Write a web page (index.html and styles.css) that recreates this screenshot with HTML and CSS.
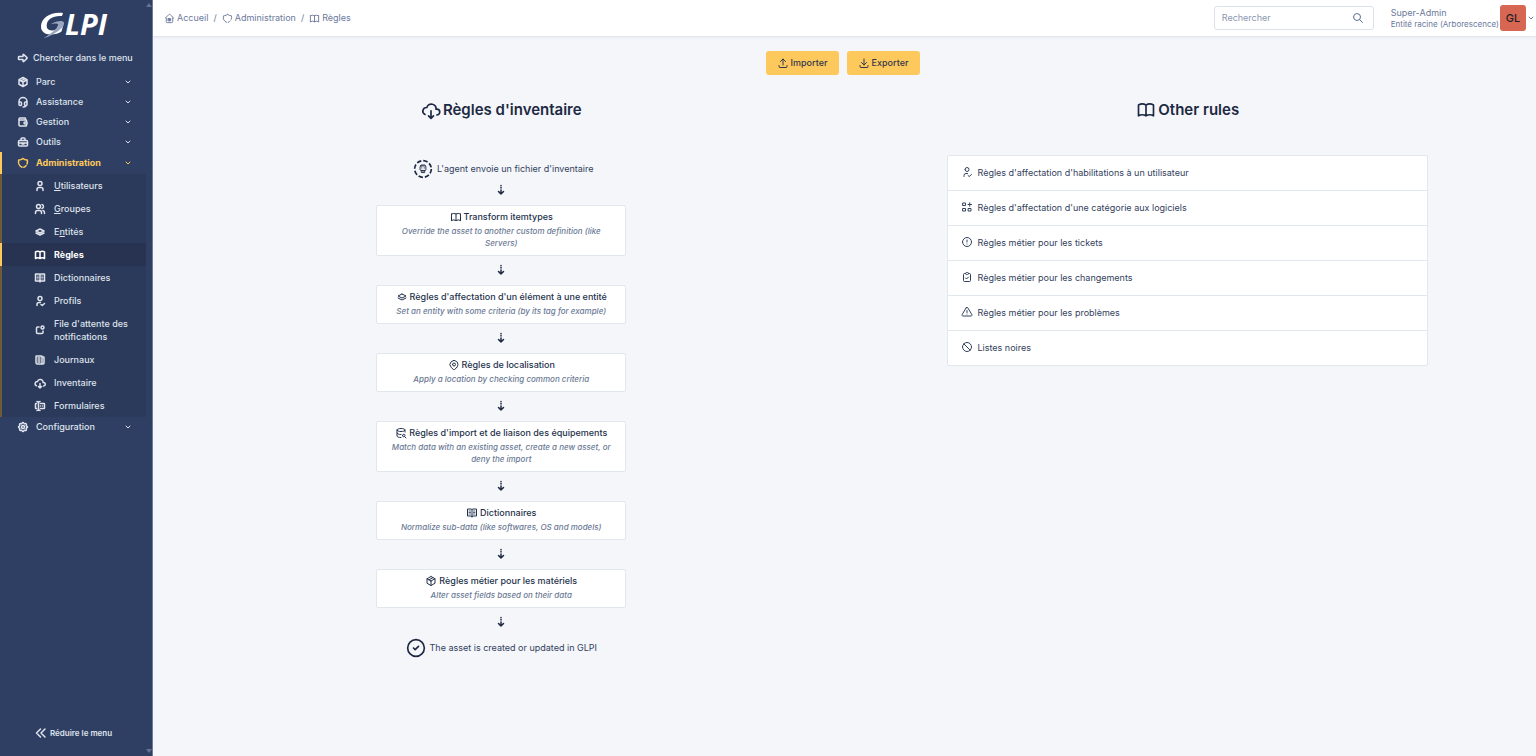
FILE: index.html
```html
<!DOCTYPE html>
<html lang="fr">
<head>
<meta charset="utf-8">
<title>Règles - GLPI</title>
<link rel="stylesheet" href="styles.css">
</head>
<body>
<svg class="sprite" aria-hidden="true">
  <symbol id="i-arrow-right" viewBox="0 0 24 24"><path d="M4 9h8V5.500a.9.9 0 0 1 1.500-.6l6.500 6.400a1 1 0 0 1 0 1.400l-6.500 6.400a.9.9 0 0 1-1.500-.6V15H4a1 1 0 0 1-1-1v-4a1 1 0 0 1 1-1z"/></symbol>
  <symbol id="i-package" viewBox="0 0 24 24"><path d="M12 3l8 4.500v9L12 21l-8-4.500v-9L12 3M12 12l8-4.500M12 12v9M12 12L4 7.500M16 5.250l-8 4.500"/></symbol>
  <symbol id="i-headset" viewBox="0 0 24 24"><path d="M4 14v-3a8 8 0 1 1 16 0v3M18 19c0 1.700-2.700 3-6 3M4 14a2 2 0 0 1 2-2h1a2 2 0 0 1 2 2v3a2 2 0 0 1-2 2H6a2 2 0 0 1-2-2zM15 14a2 2 0 0 1 2-2h1a2 2 0 0 1 2 2v3a2 2 0 0 1-2 2h-1a2 2 0 0 1-2-2z"/></symbol>
  <symbol id="i-wallet" viewBox="0 0 24 24"><path d="M17 8V5a1 1 0 0 0-1-1H6a2 2 0 0 0 0 4h12a1 1 0 0 1 1 1v3m0 4v3a1 1 0 0 1-1 1H6a2 2 0 0 1-2-2V6M20 12v4h-4a2 2 0 0 1 0-4h4"/></symbol>
  <symbol id="i-briefcase" viewBox="0 0 24 24"><path d="M5 9h14a2 2 0 0 1 2 2v7a2 2 0 0 1-2 2H5a2 2 0 0 1-2-2v-7a2 2 0 0 1 2-2zM8 9V6a2 2 0 0 1 2-2h4a2 2 0 0 1 2 2v3M3 14h18M10 14v2h4v-2"/></symbol>
  <symbol id="i-shield" viewBox="0 0 24 24"><path d="M10 20.400A12 12 0 0 1 3.500 6A12 12 0 0 0 8 5.200M12 3a12 12 0 0 0 8.500 3c.8 2.700.6 5.600-.4 8M18 17.300A12 12 0 0 1 13.500 20.500M8 5.200A12 12 0 0 0 12 3"/></symbol>
  <symbol id="i-user" viewBox="0 0 24 24"><path d="M8 7a4 4 0 1 0 8 0a4 4 0 0 0-8 0M6 21v-2a4 4 0 0 1 4-4h4a4 4 0 0 1 4 4v2"/></symbol>
  <symbol id="i-users" viewBox="0 0 24 24"><path d="M5 7a4 4 0 1 0 8 0a4 4 0 1 0-8 0M3 21v-2a4 4 0 0 1 4-4h4a4 4 0 0 1 4 4v2M16 3.130a4 4 0 0 1 0 7.750M21 21v-2a4 4 0 0 0-3-3.850"/></symbol>
  <symbol id="i-stack" viewBox="0 0 24 24"><path d="M12 6l-8 4l8 4l8-4l-8-4M4 14l8 4l8-4"/></symbol>
  <symbol id="i-book" viewBox="0 0 24 24"><path d="M3 19a9 9 0 0 1 9 0a9 9 0 0 1 9 0M3 6a9 9 0 0 1 9 0a9 9 0 0 1 9 0M3 6v13M12 6v13M21 6v13"/></symbol>
  <symbol id="i-dictionary" viewBox="0 0 24 24"><path d="M12 19a2 2 0 0 0-2-1H3V4h7a2 2 0 0 1 2 1a2 2 0 0 1 2-1h7v14h-7a2 2 0 0 0-2 1zM12 5v15"/><path stroke-width="1.500" d="M6 8h3M6 11h3M6 14h3M15 8h3M15 11h3M15 14h3"/></symbol>
  <symbol id="i-user-check" viewBox="0 0 24 24"><path d="M8 7a4 4 0 1 0 8 0a4 4 0 0 0-8 0M6 21v-2a4 4 0 0 1 4-4h3M14 19l2.500 2l4.500-4"/></symbol>
  <symbol id="i-notification" viewBox="0 0 24 24"><path d="M10 6H7a2 2 0 0 0-2 2v9a2 2 0 0 0 2 2h9a2 2 0 0 0 2-2v-3M14 7a3 3 0 1 0 6 0a3 3 0 1 0-6 0"/></symbol>
  <symbol id="i-news" viewBox="0 0 24 24"><path d="M16 6h3a1 1 0 0 1 1 1v11a2 2 0 0 1-4 0V5a1 1 0 0 0-1-1H5a1 1 0 0 0-1 1v12a3 3 0 0 0 3 3h11M8 8h4M8 12h4M8 16h4"/></symbol>
  <symbol id="i-cloud-down" viewBox="0 0 24 24"><path d="M19 18a3.500 3.500 0 0 0 0-7h-1A5 4.500 0 0 0 7 9a4.600 4.400 0 0 0-2.100 8.400M12 13v9M9 19l3 3l3-3"/></symbol>
  <symbol id="i-forms" viewBox="0 0 24 24"><path d="M12 3a3 3 0 0 0-3 3v12a3 3 0 0 0 3 3M6 3a3 3 0 0 1 3 3v12a3 3 0 0 1-3 3M13 7h7a1 1 0 0 1 1 1v8a1 1 0 0 1-1 1h-7M5 7H4a1 1 0 0 0-1 1v8a1 1 0 0 0 1 1h1M17 12h.01M13 12h.01"/></symbol>
  <symbol id="i-settings" viewBox="0 0 24 24"><path d="M10.300 4.300c.4-1.700 2.900-1.700 3.400 0a1.700 1.700 0 0 0 2.500 1.100c1.600-.9 3.300.8 2.400 2.300a1.700 1.700 0 0 0 1.100 2.600c1.700.4 1.700 2.900 0 3.400a1.700 1.700 0 0 0-1.100 2.500c.9 1.600-.8 3.300-2.300 2.400a1.700 1.700 0 0 0-2.600 1.100c-.4 1.700-2.900 1.700-3.400 0a1.700 1.700 0 0 0-2.500-1.100c-1.600.9-3.300-.8-2.400-2.300a1.700 1.700 0 0 0-1.100-2.600c-1.700-.4-1.700-2.900 0-3.400a1.700 1.700 0 0 0 1.100-2.500c-.9-1.600.8-3.300 2.300-2.400a1.700 1.700 0 0 0 2.600-1.100zM9 12a3 3 0 1 0 6 0a3 3 0 0 0-6 0"/></symbol>
  <symbol id="i-chevron" viewBox="0 0 24 24"><path d="M6 9l6 6l6-6"/></symbol>
  <symbol id="i-chevrons-left" viewBox="0 0 24 24"><path d="M11 4l-8 8l8 8M20 4l-8 8l8 8"/></symbol>
  <symbol id="i-home" viewBox="0 0 24 24"><path d="M19 9l-5.200-5.200a2.500 2.500 0 0 0-3.600 0L3 11h2v8a2 2 0 0 0 2 2h10a2 2 0 0 0 2-2v-8h2l-2-2M9.500 12h5v5h-5zM12 12v5M9.500 14.500h5"/></symbol>
  <symbol id="i-search" viewBox="0 0 24 24"><path d="M3 10a7 7 0 1 0 14 0a7 7 0 1 0-14 0M21 21l-6-6"/></symbol>
  <symbol id="i-upload" viewBox="0 0 24 24"><path d="M4 17v2a2 2 0 0 0 2 2h12a2 2 0 0 0 2-2v-2M7 9l5-5l5 5M12 4v12"/></symbol>
  <symbol id="i-download" viewBox="0 0 24 24"><path d="M4 17v2a2 2 0 0 0 2 2h12a2 2 0 0 0 2-2v-2M7 11l5 5l5-5M12 4v12"/></symbol>
  <symbol id="i-agent" viewBox="0 0 24 24"><circle cx="12" cy="12" r="10" stroke-linecap="butt" stroke-dasharray="5.450 2.400"/><path stroke-width="1.100" d="M9.500 8.300h5a1 1 0 0 1 1 1v3.400a1 1 0 0 1-1 1h-5a1 1 0 0 1-1-1V9.300a1 1 0 0 1 1-1zM10.500 10.500v.4M13.500 10.500v.4M10 13.700v2.600h4v-2.600M12 14v2M9 8l1-.8h4l1 .8"/></symbol>
  <symbol id="i-flow" viewBox="0 0 24 24"><path d="M12 3v.5M12 7v1M12 12v8M7 15l5 5l5-5"/></symbol>
  <symbol id="i-pin" viewBox="0 0 24 24"><path d="M9 11a3 3 0 1 0 6 0a3 3 0 0 0-6 0M17.700 16.700l-4.300 4.200a2 2 0 0 1-2.800 0l-4.300-4.200a8 8 0 1 1 11.400 0z"/></symbol>
  <symbol id="i-database" viewBox="0 0 24 24"><path d="M4 6c0 1.700 3.600 3 8 3s8-1.300 8-3s-3.600-3-8-3s-8 1.300-8 3M4 6v6c0 1.700 3.600 3 8 3M20 6v4M4 12v6c0 1.700 3.600 3 8 3M15 17a2.500 2.500 0 1 0 5 0a2.500 2.500 0 0 0-5 0M19.500 19.500L22 22"/></symbol>
  <symbol id="i-check" viewBox="0 0 24 24"><path d="M2 12a10 10 0 1 0 20 0a10 10 0 1 0-20 0M9 12l2 2l4-4"/></symbol>
  <symbol id="i-apps" viewBox="0 0 24 24"><path d="M4 4h5v5H4zM4 15h5v5H4zM15 15h5v5h-5zM14 7h7M17.500 3.500v7"/></symbol>
  <symbol id="i-alert" viewBox="0 0 24 24"><path d="M3 12a9 9 0 1 0 18 0a9 9 0 0 0-18 0M12 8v4M12 16h.01"/></symbol>
  <symbol id="i-clipboard" viewBox="0 0 24 24"><path d="M9 5H7a2 2 0 0 0-2 2v12a2 2 0 0 0 2 2h10a2 2 0 0 0 2-2V7a2 2 0 0 0-2-2h-2M9 5a2 2 0 0 1 2-2h2a2 2 0 0 1 2 2a2 2 0 0 1-2 2h-2a2 2 0 0 1-2-2M9 14l2 2l4-4"/></symbol>
  <symbol id="i-triangle" viewBox="0 0 24 24"><path d="M12 9v4M12 16h.01M10.400 3.600L2.300 17.100A1.900 1.900 0 0 0 3.900 20h16.200a1.900 1.900 0 0 0 1.600-2.900L13.600 3.600a1.900 1.900 0 0 0-3.200 0z"/></symbol>
  <symbol id="i-ban" viewBox="0 0 24 24"><path d="M3 12a9 9 0 1 0 18 0a9 9 0 1 0-18 0M5.700 5.700l12.600 12.600"/></symbol>
</svg>

<div class="app">
  <aside class="sidebar">
    <a class="logo" href="#" aria-label="GLPI">
      <svg viewBox="0 -8 80 46" width="80" height="46">
        <path fill="#fff" d="M23 3C11 1.500 1.500 7.500 1 16c-.2 5.500 3.800 8.500 9.500 8.500 4.500 0 8.500-1.200 11-3l1.800-6.500-5-.2-1.600 4.400c-1.500.8-3.200 1.200-5 1.200-3.500 0-5.300-2-5-5.300.5-6 6.500-9.700 15.300-9z"/>
        <path fill="#9aa6c0" d="M11 14c4-2.500 9-3.500 11.500-2.800 2.500.8 2 3.800-1 7C16.500 22.500 10 26.500 3 28.500 9 25 15 20.500 17.500 17c1.500-2.300.8-3.400-1.500-3.600z"/>
        <text class="logo-text" x="25" y="25">LPI</text>
      </svg>
    </a>
    <nav class="menu">
      <a class="item find" href="#"><svg class="icon"><use href="#i-arrow-right"/></svg><span>Chercher dans le menu</span></a>
      <a class="item" href="#"><svg class="icon"><use href="#i-package"/></svg><span class="grow">Parc</span><svg class="caret"><use href="#i-chevron"/></svg></a>
      <a class="item" href="#"><svg class="icon"><use href="#i-headset"/></svg><span class="grow">Assistance</span><svg class="caret"><use href="#i-chevron"/></svg></a>
      <a class="item" href="#"><svg class="icon"><use href="#i-wallet"/></svg><span class="grow">Gestion</span><svg class="caret"><use href="#i-chevron"/></svg></a>
      <a class="item" href="#"><svg class="icon"><use href="#i-briefcase"/></svg><span class="grow">Outils</span><svg class="caret"><use href="#i-chevron"/></svg></a>
      <a class="item current" href="#"><svg class="icon"><use href="#i-shield"/></svg><span class="grow">Administration</span><svg class="caret"><use href="#i-chevron"/></svg></a>
      <div class="submenu">
        <a class="sub" href="#"><svg class="icon"><use href="#i-user"/></svg><span><u>U</u>tilisateurs</span></a>
        <a class="sub" href="#"><svg class="icon"><use href="#i-users"/></svg><span><u>G</u>roupes</span></a>
        <a class="sub" href="#"><svg class="icon"><use href="#i-stack"/></svg><span>E<u>n</u>tités</span></a>
        <a class="sub active" href="#"><svg class="icon"><use href="#i-book"/></svg><span>Règles</span></a>
        <a class="sub" href="#"><svg class="icon"><use href="#i-dictionary"/></svg><span>Dictionnaires</span></a>
        <a class="sub" href="#"><svg class="icon"><use href="#i-user-check"/></svg><span>Profils</span></a>
        <a class="sub" href="#"><svg class="icon"><use href="#i-notification"/></svg><span>File d'attente des notifications</span></a>
        <a class="sub" href="#"><svg class="icon"><use href="#i-news"/></svg><span>Journaux</span></a>
        <a class="sub" href="#"><svg class="icon"><use href="#i-cloud-down"/></svg><span>Inventaire</span></a>
        <a class="sub" href="#"><svg class="icon"><use href="#i-forms"/></svg><span>Formulaires</span></a>
      </div>
      <a class="item" href="#"><svg class="icon"><use href="#i-settings"/></svg><span class="grow">Configuration</span><svg class="caret"><use href="#i-chevron"/></svg></a>
    </nav>
    <button class="reduce" type="button"><svg class="icon"><use href="#i-chevrons-left"/></svg><span>Réduire le menu</span></button>
    <span class="scroll-arrow up"></span>
    <span class="scroll-arrow down"></span>
  </aside>

  <div class="page">
    <header class="topbar">
      <nav class="breadcrumb" aria-label="Fil d'Ariane">
        <a href="#"><svg class="icon"><use href="#i-home"/></svg><span>Accueil</span></a>
        <span class="sep">/</span>
        <a href="#"><svg class="icon"><use href="#i-shield"/></svg><span>Administration</span></a>
        <span class="sep">/</span>
        <a href="#"><svg class="icon"><use href="#i-book"/></svg><span>Règles</span></a>
      </nav>
      <form class="search">
        <input type="search" placeholder="Rechercher" aria-label="Rechercher">
        <button type="button" aria-label="Lancer la recherche"><svg class="icon"><use href="#i-search"/></svg></button>
      </form>
      <button class="user" type="button">
        <span class="who"><span class="role">Super-Admin</span><span class="entity">Entité racine (Arborescence)</span></span>
        <span class="avatar">GL</span>
        <svg class="caret"><use href="#i-chevron"/></svg>
      </button>
    </header>

    <main class="content">
      <div class="actions">
        <button class="btn" type="button"><svg class="icon"><use href="#i-upload"/></svg><span>Importer</span></button>
        <button class="btn" type="button"><svg class="icon"><use href="#i-download"/></svg><span>Exporter</span></button>
      </div>
      <div class="columns">
        <section class="column">
          <h2><svg class="icon"><use href="#i-cloud-down"/></svg><span>Règles d'inventaire</span></h2>
          <div class="flow">
            <p class="endpoint start"><svg class="icon"><use href="#i-agent"/></svg><span>L'agent envoie un fichier d'inventaire</span></p>
            <svg class="arrow"><use href="#i-flow"/></svg>
            <a class="card" href="#"><span class="name"><svg class="icon"><use href="#i-book"/></svg><span>Transform itemtypes</span></span><span class="desc">Override the asset to another custom definition (like Servers)</span></a>
            <svg class="arrow"><use href="#i-flow"/></svg>
            <a class="card" href="#"><span class="name"><svg class="icon"><use href="#i-stack"/></svg><span>Règles d'affectation d'un élément à une entité</span></span><span class="desc">Set an entity with some criteria (by its tag for example)</span></a>
            <svg class="arrow"><use href="#i-flow"/></svg>
            <a class="card" href="#"><span class="name"><svg class="icon"><use href="#i-pin"/></svg><span>Règles de localisation</span></span><span class="desc">Apply a location by checking common criteria</span></a>
            <svg class="arrow"><use href="#i-flow"/></svg>
            <a class="card" href="#"><span class="name"><svg class="icon"><use href="#i-database"/></svg><span>Règles d'import et de liaison des équipements</span></span><span class="desc">Match data with an existing asset, create a new asset, or deny the import</span></a>
            <svg class="arrow"><use href="#i-flow"/></svg>
            <a class="card" href="#"><span class="name"><svg class="icon"><use href="#i-dictionary"/></svg><span>Dictionnaires</span></span><span class="desc">Normalize sub-data (like softwares, OS and models)</span></a>
            <svg class="arrow"><use href="#i-flow"/></svg>
            <a class="card" href="#"><span class="name"><svg class="icon"><use href="#i-package"/></svg><span>Règles métier pour les matériels</span></span><span class="desc">Alter asset fields based on their data</span></a>
            <svg class="arrow"><use href="#i-flow"/></svg>
            <p class="endpoint"><svg class="icon"><use href="#i-check"/></svg><span>The asset is created or updated in GLPI</span></p>
          </div>
        </section>
        <section class="column">
          <h2><svg class="icon"><use href="#i-book"/></svg><span>Other rules</span></h2>
          <div class="rules">
            <a href="#"><svg class="icon"><use href="#i-user-check"/></svg><span>Règles d'affectation d'habilitations à un utilisateur</span></a>
            <a href="#"><svg class="icon"><use href="#i-apps"/></svg><span>Règles d'affectation d'une catégorie aux logiciels</span></a>
            <a href="#"><svg class="icon"><use href="#i-alert"/></svg><span>Règles métier pour les tickets</span></a>
            <a href="#"><svg class="icon"><use href="#i-clipboard"/></svg><span>Règles métier pour les changements</span></a>
            <a href="#"><svg class="icon"><use href="#i-triangle"/></svg><span>Règles métier pour les problèmes</span></a>
            <a href="#"><svg class="icon"><use href="#i-ban"/></svg><span>Listes noires</span></a>
          </div>
        </section>
      </div>
    </main>
  </div>
</div>
</body>
</html>
```
FILE: styles.css
```css
* { box-sizing: border-box; }
body {
  margin: 0;
  font: 9px/12px Inter, "Liberation Sans", sans-serif;
  color: #33415c;
  background: #f4f6fa;
}
a { color: inherit; text-decoration: none; }
button, input { font: inherit; color: inherit; }
button { border: 0; background: none; padding: 0; cursor: pointer; }
.sprite { display: none; }
.icon, .caret, .arrow {
  flex: none;
  width: 12px;
  height: 12px;
  fill: none;
  stroke: currentColor;
  stroke-width: 2;
  stroke-linecap: round;
  stroke-linejoin: round;
}
.caret { width: 8px; height: 8px; stroke-width: 3; }

/* Sidebar */
.app { display: flex; min-height: 100vh; }
.sidebar {
  position: relative;
  flex: none;
  display: flex;
  flex-direction: column;
  width: 153px;
  padding-right: 6px;
  background: #2f3f64;
  border-right: 1px solid #6f7b99;
  color: #dfe3ec;
  font-weight: 500;
}
.sidebar .icon { stroke-width: 3; }
.logo { display: block; margin: 2px 0 0 40px; }
.logo svg { display: block; }
.logo-text { font: italic 700 29px "Open Sans", sans-serif; fill: #fff; }
.menu { flex: 1; }
.item {
  display: flex;
  align-items: center;
  gap: 7px;
  height: 20px;
  padding: 0 14px 0 15px;
  border-left: 2px solid transparent;
}
.item.find { gap: 4px; margin-bottom: 4px; padding-right: 0; white-space: nowrap; }
.grow { flex: 1; }
.item.current { height: 22px; color: #fec95c; border-color: #fec95c; font-weight: 700; }
.submenu { border-left: 2px solid #6f5a3a; background: #2b395a; }
.sub {
  display: flex;
  align-items: center;
  gap: 8px;
  min-height: 23px;
  padding: 5px 8px 5px 32px;
  line-height: 13px;
}
.sub.active {
  margin-left: -2px;
  border-left: 2px solid #fec95c;
  background: #273350;
  color: #fff;
  font-weight: 700;
}
.reduce {
  display: flex;
  align-items: center;
  gap: 3px;
  margin: 0 0 17px 35px;
  font-size: 8px;
  font-weight: 600;
}
.scroll-arrow {
  position: absolute;
  right: 0;
  border: 3px solid transparent;
}
.scroll-arrow.up { top: 0; border-bottom: 4px solid #66728f; }
.scroll-arrow.down { bottom: 0; border-top: 4px solid #66728f; }

/* Top bar */
.page { flex: 1; min-width: 0; }
.topbar {
  display: flex;
  align-items: center;
  height: 37px;
  padding: 0 1px 0 11px;
  background: #fff;
  border-bottom: 1px solid #e4e7ee;
  box-shadow: 0 1px 2px #e9ecf2;
  color: #6b7a9c;
}
.breadcrumb { flex: 1; display: flex; align-items: center; gap: 5px; }
.breadcrumb a { display: flex; align-items: center; gap: 2px; }
.breadcrumb .icon { width: 11px; height: 11px; }
.search {
  display: flex;
  align-items: center;
  width: 160px;
  height: 24px;
  padding: 0 9px 0 7px;
  border: 1px solid #dde1ea;
  border-radius: 3px;
}
.search input { flex: 1; min-width: 0; padding: 0; border: 0; outline: 0; background: none; }
.search input::placeholder { color: #8b97b0; opacity: 1; }
.search button { display: flex; color: #5b7099; }
.user { display: flex; align-items: center; margin-left: 17px; text-align: left; }
.who { display: flex; flex-direction: column; margin-right: 1px; }
.entity { font-size: 8px; line-height: 11px; }
.avatar {
  width: 26px;
  height: 26px;
  margin-right: 1px;
  border-radius: 3px;
  background: #d76652;
  color: #1f1f28;
  font-size: 11px;
  font-weight: 500;
  line-height: 26px;
  text-align: center;
}

/* Content */
.content { padding: 14px 5px; }
.actions { display: flex; justify-content: center; gap: 8px; padding-right: 4px; }
.btn {
  display: flex;
  align-items: center;
  justify-content: center;
  gap: 2px;
  width: 73px;
  height: 24px;
  border-radius: 3px;
  background: #fec95c;
  color: #33374a;
  font-weight: 500;
}
.columns { display: grid; grid-template-columns: 1fr 1fr; }
.column { display: flex; flex-direction: column; align-items: center; }
h2 {
  display: flex;
  align-items: center;
  gap: 2px;
  margin: 25px 0 35px;
  font-size: 15px;
  font-weight: 600;
  line-height: 20px;
  color: #1d2942;
}
h2 .icon { width: 20px; height: 20px; }
.flow { display: flex; flex-direction: column; align-items: center; width: 250px; }
.endpoint { display: flex; align-items: center; gap: 4px; height: 20px; margin: 1px 0 0; }
.endpoint .icon { width: 20px; height: 20px; color: #1d2942; }
.endpoint.start { height: 14px; margin-top: 7px; padding-left: 4px; }
.arrow { margin: 8px 0 9px; color: #1d2942; stroke-width: 3; }
.card {
  width: 100%;
  padding: 5px 12px 6px;
  border: 1px solid #e2e6ed;
  border-radius: 2px;
  background: #fff;
  text-align: center;
}
.name {
  display: flex;
  align-items: center;
  justify-content: center;
  gap: 2px;
  height: 11px;
  margin-bottom: 3px;
  color: #25324c;
  font-weight: 500;
}
.desc { display: block; color: #6b7a95; font-size: 8px; font-style: italic; font-weight: 500; }
.rules {
  width: 70%;
  border: 1px solid #e2e6ed;
  border-radius: 2px;
  background: #fff;
}
.rules a {
  display: flex;
  align-items: center;
  gap: 4px;
  height: 35px;
  padding-left: 13px;
  border-bottom: 1px solid #e2e6ed;
}
.rules a:last-child { height: 34px; border-bottom: 0; }
.rules .icon { margin-bottom: 2px; }
```
